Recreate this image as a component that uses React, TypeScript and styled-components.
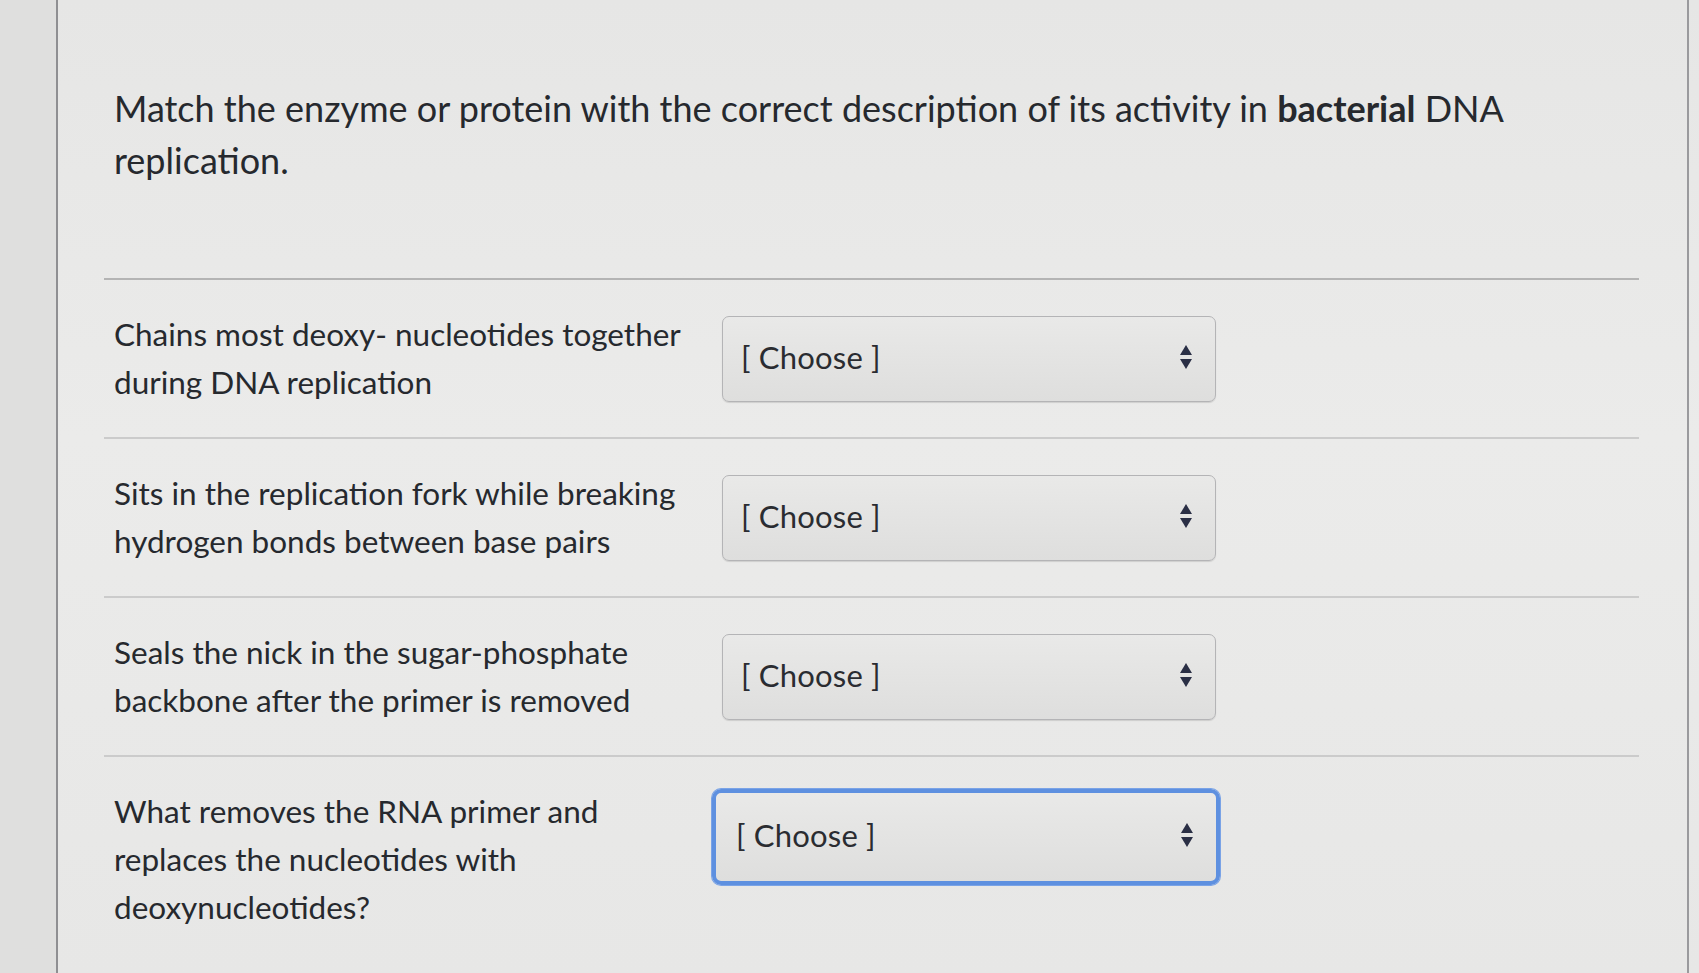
import React from "react";
import styled, { createGlobalStyle } from "styled-components";

const GlobalStyle = createGlobalStyle`
  html, body {
    margin: 0;
    padding: 0;
    background: #e4e4e3;
  }
  body {
    font-family: Lato, "Open Sans", sans-serif;
    color: #2b2e33;
  }
`;

const Screen = styled.div`
  display: flex;
  width: 1699px;
  height: 973px;
  overflow: hidden;
  background: linear-gradient(180deg, #e6e6e5 0%, #ebebea 45%, #e7e7e6 100%);
`;

const Gutter = styled.div`
  width: 56px;
  flex-shrink: 0;
  background: #dfdfde;
  border-right: 2px solid #8f8f92;
`;

const Page = styled.main`
  flex: 1;
  border-right: 2px solid #9a9a9d;
  margin-right: 10px;
  padding: 82px 48px 0 46px;
`;

const Prompt = styled.p`
  max-width: 1460px;
  margin: 0 0 92px 10px;
  font-size: 36px;
  line-height: 52px;
  color: #26292e;
`;

const Strong = styled.strong`
  font-weight: 700;
`;

const Row = styled.div<{ $first?: boolean }>`
  display: grid;
  grid-template-columns: 585px 494px;
  column-gap: 23px;
  align-items: start;
  padding: 30px 0 31px 10px;
  border-top: 2px solid ${(p) => (p.$first ? "#b4b4b4" : "#cbcbcb")};
  min-height: 90px;
`;

const Label = styled.div`
  font-size: 31.5px;
  line-height: 48px;
  color: #26292e;
`;

const SelectBox = styled.div<{ $focused?: boolean }>`
  display: flex;
  align-items: center;
  justify-content: space-between;
  box-sizing: border-box;
  height: 86px;
  margin-top: ${(p) => (p.$focused ? "2px" : "6px")};
  padding: 0 22px 4px 18px;
  border-radius: 7px;
  border: 1.5px solid #b4b4b6;
  background: linear-gradient(180deg, #e9e9e8 0%, #dededd 100%);
  box-shadow: 0 1px 1px rgba(0, 0, 0, 0.12);
  ${(p) =>
    p.$focused &&
    `
    border: 4px solid #5e90e0;
    border-radius: 9px;
    height: 96px;
    margin-left: -10px;
    margin-right: -4px;
    padding-left: 20px;
    box-shadow: 0 0 0 1px #7aa3e6;
  `}
`;

const SelectText = styled.span`
  font-size: 31px;
  color: #2a2c31;
  letter-spacing: 0.2px;
`;

const Arrows = styled.svg`
  width: 14px;
  height: 26px;
  flex-shrink: 0;
`;

const SortIcon = () => (
  <Arrows viewBox="0 0 14 26">
    <path d="M7 1 L13 11 L1 11 Z" fill="#2a2f45" />
    <path d="M7 25 L13 15 L1 15 Z" fill="#2a2f45" />
  </Arrows>
);

const Dropdown = ({ focused }: { focused?: boolean }) => (
  <SelectBox $focused={focused}>
    <SelectText>[ Choose ]</SelectText>
    <SortIcon />
  </SelectBox>
);

const items = [
  "Chains most deoxy- nucleotides together during DNA replication",
  "Sits in the replication fork while breaking hydrogen bonds between base pairs",
  "Seals the nick in the sugar-phosphate backbone after the primer is removed",
  "What removes the RNA primer and replaces the nucleotides with deoxynucleotides?",
];

export default function App() {
  return (
    <>
      <GlobalStyle />
      <Screen>
        <Gutter />
        <Page>
          <Prompt>
            Match the enzyme or protein with the correct description of its activity in <Strong>bacterial</Strong> DNA
            replication.
          </Prompt>
          {items.map((text, i) => (
            <Row key={i} $first={i === 0}>
              <Label>{text}</Label>
              <Dropdown focused={i === items.length - 1} />
            </Row>
          ))}
        </Page>
      </Screen>
    </>
  );
}
